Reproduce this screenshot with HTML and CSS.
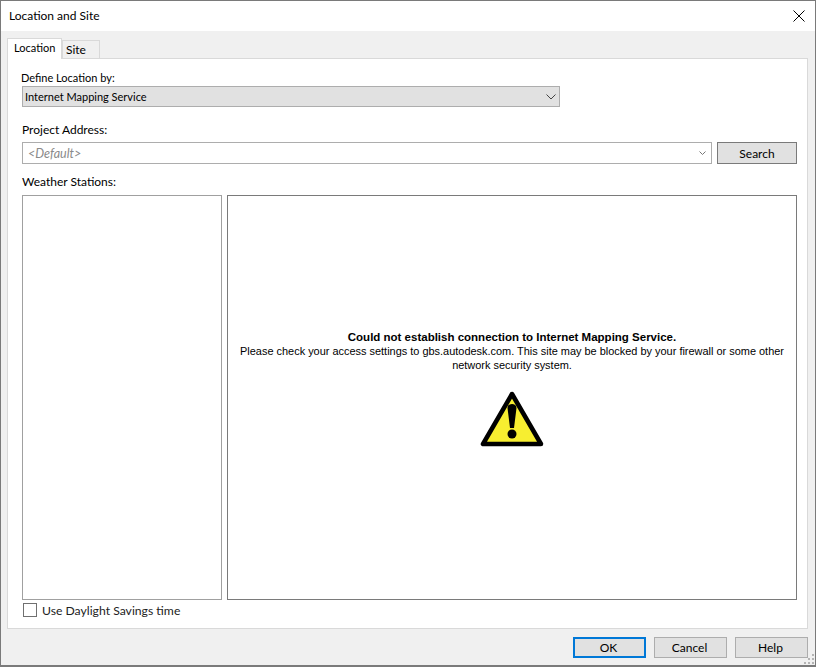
FILE: index.html
```html
<!DOCTYPE html>
<html lang="en">
<head>
<meta charset="utf-8">
<title>Location and Site</title>
<link rel="stylesheet" href="styles.css">
</head>
<body>
<div class="window">
  <header class="titlebar">
    <span class="title">Location and Site</span>
    <svg class="close" width="12" height="12" viewBox="0 0 12 12"><path d="M.5.5l11 11M11.5.5l-11 11" stroke="#000" stroke-width="1" fill="none"/></svg>
  </header>
  <main class="body">
    <div class="tabs">
      <div class="tab active">Location</div>
      <div class="tab">Site</div>
    </div>
    <section class="panel">
      <div class="label label-define">Define Location by:</div>
      <div class="select">
        <span>Internet Mapping Service</span>
        <svg width="10" height="6" viewBox="0 0 10 6"><path d="M.5.5L5 5 9.500.5" stroke="#444" fill="none"/></svg>
      </div>
      <div class="label label-address">Project Address:</div>
      <div class="address-row">
        <div class="combo">
          <span class="placeholder">&lt;Default&gt;</span>
          <svg width="7" height="5" viewBox="0 0 7 5"><path d="M.5.500L3.500 3.500 6.500.5" stroke="#777" fill="none"/></svg>
        </div>
        <div class="btn search">Search</div>
      </div>
      <div class="label label-weather">Weather Stations:</div>
      <div class="stations">
        <div class="list"></div>
        <div class="message">
          <div class="msg-title">Could not establish connection to Internet Mapping Service.</div>
          <div class="msg-text">Please check your access settings to gbs.autodesk.com. This site may be blocked by your firewall or some other network security system.</div>
          <svg class="warning" width="64" height="58" viewBox="0 0 64 58">
            <path d="M32 4L3 54h58z" fill="#f7ee30" stroke="#000" stroke-width="4.500" stroke-linejoin="round"/>
            <path d="M27.500 18c0-5.500 9-5.500 9 0L34 38h-4z" fill="#000"/>
            <circle cx="32" cy="44" r="4.500" fill="#000"/>
          </svg>
        </div>
      </div>
      <label class="check-row">
        <span class="checkbox"></span>
        <span class="check-text">Use Daylight Savings time</span>
      </label>
    </section>
    <footer class="footer">
      <div class="btn action primary">OK</div>
      <div class="btn action">Cancel</div>
      <div class="btn action">Help</div>
      <svg class="grip" width="11" height="11" viewBox="0 0 11 11" fill="#b4b4b4">
        <rect x="8" y="0" width="2" height="2"/><rect x="4" y="4" width="2" height="2"/><rect x="8" y="4" width="2" height="2"/>
        <rect x="0" y="8" width="2" height="2"/><rect x="4" y="8" width="2" height="2"/><rect x="8" y="8" width="2" height="2"/>
      </svg>
    </footer>
  </main>
</div>
</body>
</html>
```
FILE: styles.css
```css
* { box-sizing: border-box; }
html, body { margin: 0; height: 100%; }
body { font-family: "Lato", "Noto Sans", sans-serif; font-size: 12px; color: #000; background: #fff; }
.window { width: 816px; height: 667px; border: 1px solid #7a7a7a; border-bottom-width: 2px; display: flex; flex-direction: column; overflow: hidden; }
.titlebar { height: 30px; flex: none; background: #fff; display: flex; align-items: center; justify-content: space-between; padding: 0 10px 2px 8px; }
.title { font-size: 12px; }
.close { margin-top: 2px; }
.body { flex: 1; background: #f0f0f0; display: flex; flex-direction: column; padding: 7px 7px 0 6px; position: relative; }
.tabs { display: flex; height: 21px; flex: none; align-items: flex-end; margin-bottom: -1px; position: relative; z-index: 1; }
.tab { border: 1px solid #d9d9d9; border-bottom: 0; height: 19px; width: 38px; padding-left: 3px; line-height: 18px; }
.tab.active { height: 21px; width: 55px; background: #fff; padding-left: 6px; line-height: 18px; border-bottom: 0; font-size: 11px; }
.panel { height: 571px; flex: none; background: #fff; border: 1px solid #d9d9d9; padding-left: 14px; padding-right: 9px; display: flex; flex-direction: column; }
.label { height: 16px; line-height: 16px; }
.label-define { margin-top: 11px; margin-left: -1px; font-size: 11px; }
.label-address { margin-top: 15px; }
.label-weather { margin-top: 10px; }
.select { margin-top: 0; height: 21px; width: 538px; background: #e1e1e1; border: 1px solid #adadad; display: flex; align-items: center; justify-content: space-between; padding: 0 3px 0 2px; font-size: 11px; }
.address-row { margin-top: 4px; display: flex; gap: 5px; height: 22px; }
.combo { width: 690px; border: 1px solid #adadad; display: flex; align-items: center; justify-content: space-between; padding: 0 5px 0 5px; background: #fff; }
.placeholder { color: #8a8a8a; font-style: italic; font-size: 12.500px; }
.btn { background: #e1e1e1; display: flex; align-items: center; justify-content: center; }
.search { width: 80px; border: 1px solid #7a7a7a; }
.stations { margin-top: 5px; display: flex; gap: 5px; height: 405px; }
.list { width: 200px; border: 1px solid #a0a0a0; }
.message { width: 570px; border: 1px solid #7a7a7a; display: flex; flex-direction: column; align-items: center; padding: 134px 8px 0; font-family: "Liberation Sans", Arial, sans-serif; font-size: 10.950px; line-height: 14px; text-align: center; }
.msg-title { font-weight: bold; font-size: 11.500px; }
.warning { margin-top: 18px; }
.check-row { margin-top: 3px; display: flex; align-items: center; gap: 5px; height: 14px; padding-left: 1px; color: #222; }
.check-text { font-size: 12.200px; }
.checkbox { width: 14px; height: 14px; border: 1px solid #707070; background: #fff; }
.footer { flex: 1; display: flex; justify-content: flex-end; gap: 8px; padding-top: 8px; padding-right: 0; }
.action { width: 73px; height: 21px; border: 1px solid #adadad; padding-right: 2px; }
.primary { border: 2px solid #0078d7; }
.grip { position: absolute; right: 0; bottom: 0; }
```
